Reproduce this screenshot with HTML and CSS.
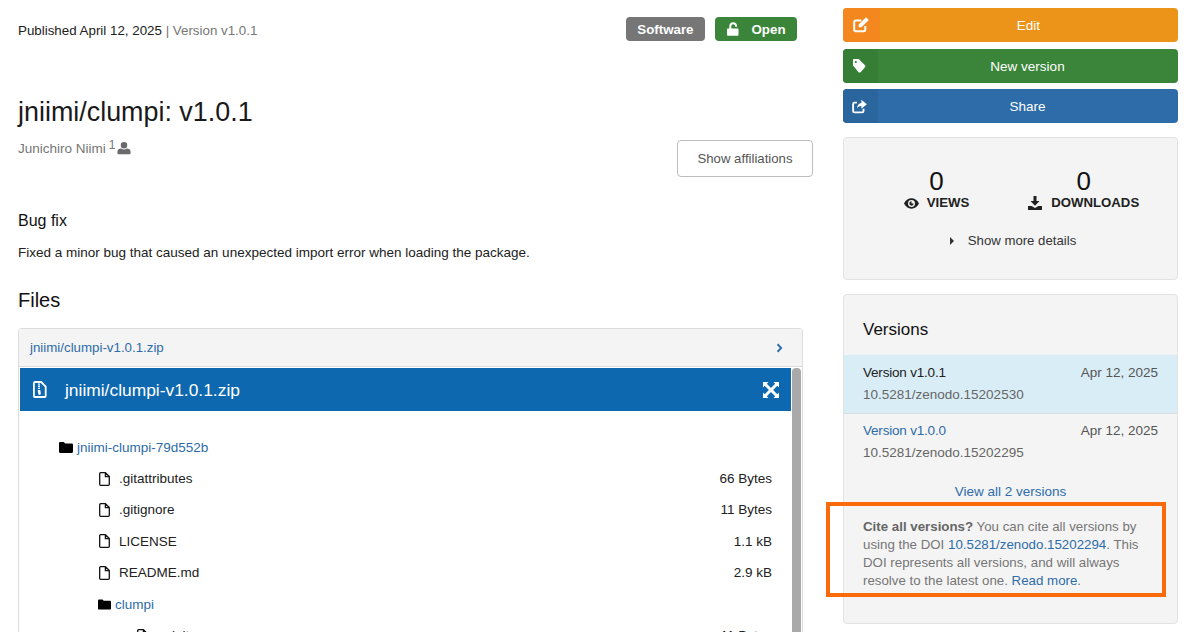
FILE: index.html
```html
<!DOCTYPE html>
<html lang="en">
<head>
<meta charset="utf-8">
<title>jniimi/clumpi: v1.0.1</title>
<link rel="stylesheet" href="styles.css">
</head>
<body>
<div class="page">
  <main class="main">
    <div class="meta-row">
      <p class="published">Published April 12, 2025 <span class="muted">| Version v1.0.1</span></p>
      <div class="labels">
        <span class="label label-grey">Software</span>
        <span class="label label-green">
          <svg class="ico-unlock" viewBox="0 0 12 14"><path fill="currentColor" d="M1 6.500h1.300V4.200C2.300 1.800 4 .3 6.200.3s3.900 1.500 3.900 3.900v.6H8.100v-.6c0-1.200-.8-2-1.900-2s-1.900.8-1.900 2v2.300h6.200c.6 0 1 .4 1 1v5.300c0 .6-.4 1-1 1H1c-.6 0-1-.4-1-1V7.500c0-.6.4-1 1-1z"/></svg>
          Open
        </span>
      </div>
    </div>

    <h1 class="title">jniimi/clumpi: v1.0.1</h1>
    <div class="creator-row">
      <p class="creator">Junichiro Niimi <sup class="sup">1</sup>
        <svg class="ico-user" viewBox="0 0 16 14"><path fill="currentColor" d="M8 0a3.700 3.700 0 0 1 3.700 3.800A3.700 3.700 0 0 1 8 7.500a3.700 3.700 0 0 1-3.700-3.700A3.700 3.700 0 0 1 8 0zM4.800 7.600c.9.6 2 1 3.200 1s2.300-.4 3.200-1c2.300 0 4.300 1.300 4.300 3.600V13c0 .6-.4 1-1 1H1.500c-.6 0-1-.4-1-1v-1.800c0-2.300 2-3.600 4.300-3.600z"/></svg>
      </p>
      <button class="btn-affil" type="button">Show affiliations</button>
    </div>

    <h2 class="bug">Bug fix</h2>
    <p class="desc">Fixed a minor bug that caused an unexpected import error when loading the package.</p>

    <h2 class="files-h">Files</h2>
    <section class="accordion">
      <header class="acc-head">
        <a class="link acc-link" href="#">jniimi/clumpi-v1.0.1.zip</a>
        <svg class="ico-chev" viewBox="0 0 8 12"><path d="M1.700 1.500 6 6l-4.300 4.500" fill="none" stroke="currentColor" stroke-width="2.200"/></svg>
      </header>
      <div class="preview">
        <div class="preview-inner">
          <div class="blue-bar">
            <span class="blue-left">
              <svg class="ico-zip" viewBox="0 0 14 17"><path fill="none" stroke="currentColor" stroke-width="1.800" d="M1.900 1h6.300l4.500 4.500V15a1 1 0 0 1-1 1H1.900a1 1 0 0 1-1-1V2a1 1 0 0 1 1-1z"/><path fill="currentColor" d="M5 2.500h2v1.300H5zM5 4.600h2v1.300H5zM5 6.700h2V8H5zM4.700 9h2.600l.5 3.500a1.500 1.500 0 0 1-1.300 1.500 1.500 1.500 0 0 1-1.300-1.500z"/></svg>
              jniimi/clumpi-v1.0.1.zip
            </span>
            <svg class="ico-expand" viewBox="0 0 16 16"><path fill="currentColor" d="M0 0h5.500L3.800 1.700 8 5.900l4.200-4.200L10.500 0H16v5.500l-1.700-1.700L10.100 8l4.200 4.200 1.700-1.700V16h-5.500l1.700-1.700L8 10.100l-4.200 4.200L5.500 16H0v-5.500l1.700 1.700L5.900 8 1.700 3.800 0 5.500z"/></svg>
          </div>
          <ul class="tree">
            <li class="row lvl1"><span class="name"><svg class="ico-folder" viewBox="0 0 14 11"><path fill="currentColor" d="M1.200 0h3.600l1.400 1.500h6.600c.7 0 1.200.5 1.200 1.200v7.100c0 .7-.5 1.200-1.200 1.200H1.200C.5 11 0 10.500 0 9.800V1.200C0 .5.500 0 1.200 0z"/></svg><a class="link" href="#">jniimi-clumpi-79d552b</a></span></li>
            <li class="row lvl2"><span class="name"><svg class="ico-file" viewBox="0 0 11 14"><path fill="none" stroke="currentColor" stroke-width="1.300" d="M1.700.7h4.700l3.900 3.900v7.700a1 1 0 0 1-1 1H1.700a1 1 0 0 1-1-1V1.700a1 1 0 0 1 1-1zM6.400.7v3.900h3.900"/></svg>.gitattributes</span><span>66 Bytes</span></li>
            <li class="row lvl2"><span class="name"><svg class="ico-file" viewBox="0 0 11 14"><path fill="none" stroke="currentColor" stroke-width="1.300" d="M1.700.7h4.700l3.900 3.900v7.700a1 1 0 0 1-1 1H1.700a1 1 0 0 1-1-1V1.700a1 1 0 0 1 1-1zM6.400.7v3.900h3.900"/></svg>.gitignore</span><span>11 Bytes</span></li>
            <li class="row lvl2"><span class="name"><svg class="ico-file" viewBox="0 0 11 14"><path fill="none" stroke="currentColor" stroke-width="1.300" d="M1.700.7h4.700l3.900 3.900v7.700a1 1 0 0 1-1 1H1.700a1 1 0 0 1-1-1V1.700a1 1 0 0 1 1-1zM6.400.7v3.900h3.900"/></svg>LICENSE</span><span>1.1 kB</span></li>
            <li class="row lvl2"><span class="name"><svg class="ico-file" viewBox="0 0 11 14"><path fill="none" stroke="currentColor" stroke-width="1.300" d="M1.700.7h4.700l3.900 3.900v7.700a1 1 0 0 1-1 1H1.700a1 1 0 0 1-1-1V1.700a1 1 0 0 1 1-1zM6.400.7v3.900h3.900"/></svg>README.md</span><span>2.9 kB</span></li>
            <li class="row lvl2b"><span class="name"><svg class="ico-folder" viewBox="0 0 14 11"><path fill="currentColor" d="M1.200 0h3.600l1.400 1.500h6.600c.7 0 1.200.5 1.200 1.200v7.100c0 .7-.5 1.200-1.200 1.200H1.200C.5 11 0 10.500 0 9.800V1.200C0 .5.500 0 1.200 0z"/></svg><a class="link" href="#">clumpi</a></span></li>
            <li class="row lvl3"><span class="name"><svg class="ico-file" viewBox="0 0 11 14"><path fill="none" stroke="currentColor" stroke-width="1.300" d="M1.700.7h4.700l3.900 3.900v7.700a1 1 0 0 1-1 1H1.700a1 1 0 0 1-1-1V1.700a1 1 0 0 1 1-1zM6.400.7v3.900h3.900"/></svg>__init__.py</span><span>11 Bytes</span></li>
          </ul>
        </div>
        <div class="scrollbar"></div>
      </div>
    </section>
  </main>

  <aside class="side">
    <div class="actions">
      <a class="act act-edit" href="#"><span class="act-ico"><svg class="ico-edit" viewBox="0 0 16 16"><path fill="none" stroke="currentColor" stroke-width="2" d="M12.300 9v3.600c0 1-.7 1.600-1.600 1.600H2.800c-1 0-1.600-.7-1.600-1.600V5c0-1 .7-1.600 1.600-1.600h5.500"/><path fill="currentColor" d="m13 .2 2.800 2.800-7.300 7.300H5.700V7.500z"/></svg></span><span class="act-text">Edit</span></a>
      <a class="act act-new" href="#"><span class="act-ico"><svg class="ico-tag" viewBox="0 0 14 15"><path fill="currentColor" fill-rule="evenodd" d="M1.200 0h4.300c.5 0 .9.200 1.200.5l6.200 6.200c.6.600.6 1.600 0 2.200l-4.700 5.200c-.6.600-1.600.6-2.200 0L.5 7.500C.2 7.200 0 6.800 0 6.300V1.200C0 .5.500 0 1.200 0zM3 2a1.200 1.200 0 1 0 0 2.400A1.200 1.200 0 0 0 3 2z"/></svg></span><span class="act-text">New version</span></a>
      <a class="act act-share" href="#"><span class="act-ico"><svg class="ico-share" viewBox="0 0 16 16"><path fill="none" stroke="currentColor" stroke-width="2" d="M12.300 10.500v2.200c0 1-.7 1.600-1.600 1.600H2.800c-1 0-1.600-.7-1.600-1.600V5.500c0-1 .7-1.600 1.600-1.600h2.500"/><path fill="currentColor" d="M10 .8l5.800 4.800L10 10.400V7.500c-2.800 0-4 .8-4.600 3 0-3.700 1.800-6 4.600-6.300z"/></svg></span><span class="act-text">Share</span></a>
    </div>

    <section class="card stats">
      <div class="stat-row">
        <div class="stat">
          <span class="stat-num">0</span>
          <span class="stat-label"><svg class="ico-eye" viewBox="0 0 16 11"><path fill="currentColor" fill-rule="evenodd" d="M8 0c3.500 0 6.500 2.200 8 5.500C14.500 8.800 11.500 11 8 11S1.500 8.800 0 5.500C1.500 2.200 4.500 0 8 0zm0 1.800a3.700 3.700 0 1 0 0 7.400 3.700 3.700 0 0 0 0-7.400zM8 3.200v2.300h2.300A2.300 2.300 0 1 1 8 3.200z"/></svg>VIEWS</span>
        </div>
        <div class="stat">
          <span class="stat-num">0</span>
          <span class="stat-label"><svg class="ico-dl" viewBox="0 0 14 14"><path fill="currentColor" d="M5.500 0h3v5h3L7 9.800 2.500 5h3zM0 10h3.600L7 12l3.400-2H14v4H0z"/></svg>DOWNLOADS</span>
        </div>
      </div>
      <p class="more"><svg class="ico-caret" viewBox="0 0 4 8"><path fill="currentColor" d="M0 0l4 4-4 4z"/></svg>Show more details</p>
    </section>

    <section class="card versions">
      <h2 class="ver-h">Versions</h2>
      <div class="ver ver-active">
        <div class="ver-line"><span class="ver-name">Version v1.0.1</span><span class="ver-date">Apr 12, 2025</span></div>
        <div class="ver-doi">10.5281/zenodo.15202530</div>
      </div>
      <div class="ver">
        <div class="ver-line"><a class="link ver-name" href="#">Version v1.0.0</a><span class="ver-date">Apr 12, 2025</span></div>
        <div class="ver-doi">10.5281/zenodo.15202295</div>
      </div>
      <p class="view-all"><a class="link" href="#">View all 2 versions</a></p>
      <div class="cite-wrap">
        <p class="cite"><strong>Cite all versions?</strong> You can cite all versions by using the DOI <a class="link" href="#">10.5281/zenodo.15202294</a>. This DOI represents all versions, and will always resolve to the latest one. <a class="link" href="#">Read more</a>.</p>
        <div class="highlight"></div>
      </div>
    </section>
  </aside>
</div>
</body>
</html>
```
FILE: styles.css
```css
* { box-sizing: border-box; }
html, body { margin: 0; height: 632px; overflow: hidden; background: #fff; }
body { font-family: "Liberation Sans", Arial, sans-serif; font-size: 13.5px; color: #212121; }
p, h1, h2, ul { margin: 0; padding: 0; }
ul { list-style: none; }
a { text-decoration: none; }
svg { display: block; flex: none; }
.link { color: #2d6ca8; }
.muted { color: #767676; }

.page { display: flex; align-items: flex-start; padding-left: 18px; }
.main { width: 795px; flex: none; margin-right: 30px; }
.side { width: 335px; flex: none; padding-top: 8px; }

.meta-row { display: flex; justify-content: space-between; align-items: center; padding-top: 17px; height: 41px; padding-right: 16px; }
.published { font-size: 13.35px; padding-top: 2px; height: 24px; line-height: 24px; margin-top: -1px; }
.labels { display: flex; gap: 10px; }
.label { display: flex; align-items: center; height: 24px; border-radius: 4px; color: #fff; font-weight: 700; font-size: 13.3px; padding: 0 11.5px; }
.label-grey { background: #767676; }
.label-green { background: #3a853a; gap: 13px; padding: 0 11.500px; }
.ico-unlock { width: 12px; height: 14px; }

.title { font-weight: 400; font-size: 26.900px; line-height: 34px; margin-top: 54px; color: #1a1a1a; }
.creator-row { display: flex; justify-content: space-between; align-items: flex-start; margin-top: 11px; height: 38px; }
.creator { display: flex; align-items: center; color: #767676; line-height: 20px; margin-top: -1px; }
.sup { font-size: 12px; line-height: 12px; margin: -8px 0 0 3px; }
.ico-user { width: 14px; height: 14px; margin: -3px 0 0 2px; color: #6a6a6a; }
.btn-affil { width: 136px; height: 37px; background: #fff; border: 1px solid #bdbdbd; border-radius: 4px; font: 13.2px "Liberation Sans", Arial, sans-serif; color: #555; }

.bug { font-weight: 400; font-size: 16px; line-height: 20px; margin-top: 33px; color: #111; }
.desc { line-height: 20px; margin-top: 12px; }
.files-h { font-weight: 400; font-size: 20px; line-height: 24px; margin-top: 25px; color: #111; }

.accordion { width: 785px; margin-top: 16px; border: 1px solid #ddd; border-bottom: none; border-radius: 4px 4px 0 0; background: #fff; height: 400px; }
.acc-head { display: flex; justify-content: space-between; align-items: center; height: 38px; padding: 0 19px 0 11px; background: #f4f4f4; border-bottom: 1px solid #ddd; }
.acc-link { font-size: 13.3px; }
.ico-chev { width: 7px; height: 10px; color: #2d6ca8; }
.preview { display: flex; margin: 1px 0 0 1px; }
.preview-inner { width: 771px; flex: none; }
.scrollbar { width: 9px; margin-left: 1px; height: 300px; background: #a9a9a9; border-radius: 4px 4px 0 0; }
.blue-bar { display: flex; justify-content: space-between; align-items: center; height: 43px; background: #0e68b0; color: #fff; padding: 0 12px 0 13px; font-size: 17.4px; }
.blue-left { display: flex; align-items: center; gap: 18px; padding-top: 1px; }
.ico-zip { width: 14px; height: 17px; margin-top: -1px; }
.ico-expand { width: 16px; height: 16px; }

.tree { padding: 20.500px 19px 0 39px; }
.row { display: flex; justify-content: space-between; align-items: center; height: 31.400px; }
.name { display: flex; align-items: center; }
.lvl2 { padding-left: 40px; }
.lvl2 .ico-file { margin-right: 9px; }
.lvl2b { padding-left: 39px; }
.lvl2b .ico-folder { width: 13px; }
.lvl3 { padding-left: 78px; }
.lvl3 .ico-file { margin-right: 9px; }
.ico-folder { width: 14px; height: 11px; margin-right: 4px; color: #000; }
.ico-file { width: 11px; height: 14px; color: #111; }

.actions { display: flex; flex-direction: column; }
.act { display: flex; height: 34px; border-radius: 4px; color: #fff; overflow: hidden; line-height: 34px; }
.act-new { margin-top: 7px; }
.act-share { margin-top: 6px; }
.act-ico { width: 35px; flex: none; display: flex; align-items: center; justify-content: center; padding-right: 2px; }
.act-text { flex: 1; text-align: center; margin-left: -1px; padding-top: 1px; }
.act-edit { background: #ec9419; }
.act-edit .act-ico { background: #f5871f; width: 37px; }
.act-new { background: #3a853a; }
.act-new .act-ico { background: #367d36; }
.act-share { background: #2d6ca8; }
.act-share .act-ico { background: #2a659d; }
.ico-edit { width: 16px; height: 16px; }
.ico-tag { width: 13px; height: 14px; }
.ico-share { width: 15px; height: 15px; }

.card { background: #f4f4f4; border: 1px solid #e3e3e3; border-radius: 4px; }
.stats { height: 143px; margin-top: 14px; padding-top: 30px; }
.stat-row { display: flex; justify-content: center; gap: 59px; padding-left: 22px; }
.stat { display: flex; flex-direction: column; align-items: center; }
.stat-num { font-size: 26px; line-height: 26px; color: #111; }
.stat-label { display: flex; align-items: center; font-weight: 700; font-size: 13.2px; line-height: 18px; color: #212121; }
.ico-eye { width: 15px; height: 11px; margin-right: 8px; }
.ico-dl { width: 14px; height: 14px; margin-right: 9px; }
.more { display: flex; align-items: center; justify-content: center; margin-top: 19px; padding-left: 5px; color: #333; font-size: 13.2px; line-height: 20px; }
.ico-caret { width: 4px; height: 8px; margin-right: 14px; }

.versions { margin-top: 14px; height: 330px; }
.ver-h { font-weight: 400; font-size: 17px; line-height: 22px; padding: 24px 19px 0; color: #111; }
.ver { padding: 0 19px 3px; height: 58px; display: flex; flex-direction: column; justify-content: center; gap: 4px; line-height: 18px; }
.ver-h + .ver { margin-top: 14px; height: 59px; padding-bottom: 0; border-bottom: 1px solid #ddd; }
.ver-active { background: #d9edf6; }
.ver-line { display: flex; justify-content: space-between; }
.ver-name { letter-spacing: -0.2px; }
.ver-date { color: #555; }
.ver-doi { color: #666; }
.view-all { text-align: center; line-height: 18px; margin-top: 11px; }
.cite-wrap { position: relative; margin-top: 1px; padding: 16px 19px 7px; }
.cite { font-size: 13.3px; line-height: 18px; color: #767676; }
.cite strong { color: #666; }
.highlight { position: absolute; left: -18px; right: 11px; top: 0; bottom: 0; border: 4px solid #fb6a0a; pointer-events: none; }
```
